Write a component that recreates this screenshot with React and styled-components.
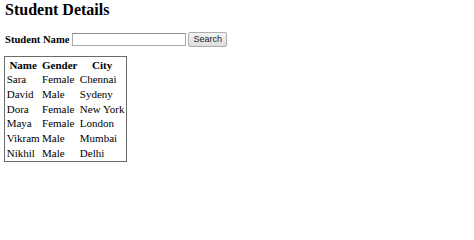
import React from 'react';
import styled, { createGlobalStyle } from 'styled-components';

const GlobalStyle = createGlobalStyle`
  html, body {
    margin: 0;
    padding: 0;
    background: #fff;
  }
  body {
    font-family: "Liberation Serif", "Times New Roman", serif;
    color: #000;
  }
`;

const Page = styled.div`
  padding: 1px 5px 0 5px;
`;

const Title = styled.h2`
  font-size: 16px;
  font-weight: bold;
  line-height: 18px;
  margin: 0 0 13px 0;
`;

const SearchRow = styled.form`
  display: flex;
  align-items: center;
  gap: 2px;
  margin: 0 0 9px 0;
`;

const Label = styled.label`
  font-size: 10.6px;
  font-weight: bold;
  margin-right: 1px;
`;

const TextInput = styled.input`
  box-sizing: border-box;
  width: 114px;
  height: 13px;
  border: 1px solid #a9a9a9;
  border-top-color: #8f8f8f;
  padding: 0 2px;
  font-size: 9px;
  outline: none;
`;

const Button = styled.button`
  box-sizing: border-box;
  height: 15px;
  padding: 0 4px;
  border: 1px solid #adadad;
  border-radius: 2px;
  background: linear-gradient(#f4f4f4, #dedede);
  font-family: "Liberation Sans", Arial, sans-serif;
  font-size: 9px;
  color: #222;
  line-height: 13px;
`;

const Table = styled.table`
  margin-left: -1px;
  border: 1px solid #6b6b6b;
  border-spacing: 1.4px;
  font-size: 11px;
  line-height: 12.3px;
`;

const Head = styled.th`
  font-weight: bold;
  padding: 0.7px;
  text-align: center;
`;

const Cell = styled.td`
  padding: 0.7px;
  text-align: left;
`;

const students = [
  { name: 'Sara', gender: 'Female', city: 'Chennai' },
  { name: 'David', gender: 'Male', city: 'Sydeny' },
  { name: 'Dora', gender: 'Female', city: 'New York' },
  { name: 'Maya', gender: 'Female', city: 'London' },
  { name: 'Vikram', gender: 'Male', city: 'Mumbai' },
  { name: 'Nikhil', gender: 'Male', city: 'Delhi' },
];

export default function App() {
  return (
    <Page>
      <GlobalStyle />
      <Title>Student Details</Title>
      <SearchRow onSubmit={(e) => e.preventDefault()}>
        <Label htmlFor="studentName">Student Name</Label>
        <TextInput id="studentName" type="text" />
        <Button type="submit">Search</Button>
      </SearchRow>
      <Table>
        <thead>
          <tr>
            <Head>Name</Head>
            <Head>Gender</Head>
            <Head>City</Head>
          </tr>
        </thead>
        <tbody>
          {students.map((s) => (
            <tr key={s.name}>
              <Cell>{s.name}</Cell>
              <Cell>{s.gender}</Cell>
              <Cell>{s.city}</Cell>
            </tr>
          ))}
        </tbody>
      </Table>
    </Page>
  );
}
